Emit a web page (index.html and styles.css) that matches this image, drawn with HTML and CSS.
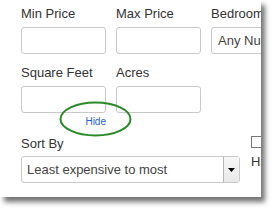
FILE: index.html
```html
<!DOCTYPE html>
<html>
<head>
<meta charset="utf-8">
<link rel="stylesheet" href="styles.css">
</head>
<body>
<div class="frame">
  <div class="row">
    <div class="field">
      <div class="label">Min Price</div>
      <div class="input"></div>
    </div>
    <div class="field">
      <div class="label">Max Price</div>
      <div class="input"></div>
    </div>
    <div class="field">
      <div class="label">Bedrooms</div>
      <div class="input text">Any Number</div>
    </div>
  </div>
  <div class="row row2">
    <div class="field">
      <div class="label">Square Feet</div>
      <div class="input"></div>
      <div class="hide">Hide</div>
    </div>
    <div class="field">
      <div class="label">Acres</div>
      <div class="input"></div>
    </div>
  </div>
  <div class="sortrow">
    <div class="sort">
      <div class="label">Sort By</div>
      <div class="select">
        <span class="seltext">Least expensive to most</span>
        <span class="selbtn"><svg width="7" height="4" viewBox="0 0 7 4"><path d="M0 0H7L3.5 4Z" fill="#000"/></svg></span>
      </div>
    </div>
    <div class="check">
      <div class="box"></div>
      <div class="label">Has Photos</div>
    </div>
  </div>
  <svg class="ring" width="74" height="37" viewBox="0 0 74 37"><ellipse cx="36.5" cy="18" rx="35" ry="16.5" fill="none" stroke="#2a8a2a" stroke-width="2"/></svg>
</div>
</body>
</html>
```
FILE: styles.css
```css
html, body {
  margin: 0;
  padding: 0;
  background: #fff;
}
body {
  width: 276px;
  height: 213px;
  overflow: hidden;
  font-family: "Liberation Sans", Arial, sans-serif;
}
.frame {
  position: relative;
  width: 261px;
  height: 197px;
  background: #fff;
  box-shadow: 4px 5px 5px rgba(0, 0, 0, 0.55);
  overflow: hidden;
  box-sizing: border-box;
  padding: 6px 0 0 21px;
}
.row {
  display: flex;
  gap: 10px;
  width: 300px;
}
.row2 {
  margin-top: 11px;
}
.field {
  display: flex;
  flex-direction: column;
  width: 85px;
  flex: none;
}
.label {
  font-size: 13px;
  line-height: 15px;
  color: #333;
  white-space: nowrap;
}
.input {
  margin-top: 6px;
  width: 85px;
  height: 27px;
  box-sizing: border-box;
  border: 1px solid #c9c9c9;
  border-radius: 3px;
  background: #fff;
}
.input.text {
  font-size: 13px;
  line-height: 25px;
  color: #444;
  padding-left: 6px;
  white-space: nowrap;
  overflow: hidden;
}
.hide {
  margin-top: 3px;
  font-size: 10px;
  line-height: 12px;
  color: #1f62cc;
  text-align: right;
}
.sortrow {
  display: flex;
  margin-top: 8px;
}
.sort {
  display: flex;
  flex-direction: column;
  width: 219px;
  flex: none;
}
.select {
  margin-top: 5px;
  height: 27px;
  box-sizing: border-box;
  border: 1px solid #c9c9c9;
  border-radius: 3px;
  display: flex;
  align-items: stretch;
  padding: 0 0 0 5px;
}
.seltext {
  flex: 1;
  font-size: 13px;
  line-height: 25px;
  color: #444;
  white-space: nowrap;
}
.selbtn {
  width: 16px;
  margin: 0 0 0 0;
  box-sizing: border-box;
  border-left: 1px solid #b5b5b5;
  background: linear-gradient(#f7f7f7, #e9e9e9);
  display: flex;
  align-items: center;
  justify-content: center;
  padding-top: 1px;
}
.check {
  margin-left: 11px;
  display: flex;
  flex-direction: column;
  flex: none;
}
.box {
  width: 12px;
  height: 12px;
  box-sizing: border-box;
  border: 1px solid #777;
  background: #fff;
  margin-bottom: 6px;
}
.ring {
  position: absolute;
  left: 59px;
  top: 101px;
}
```
